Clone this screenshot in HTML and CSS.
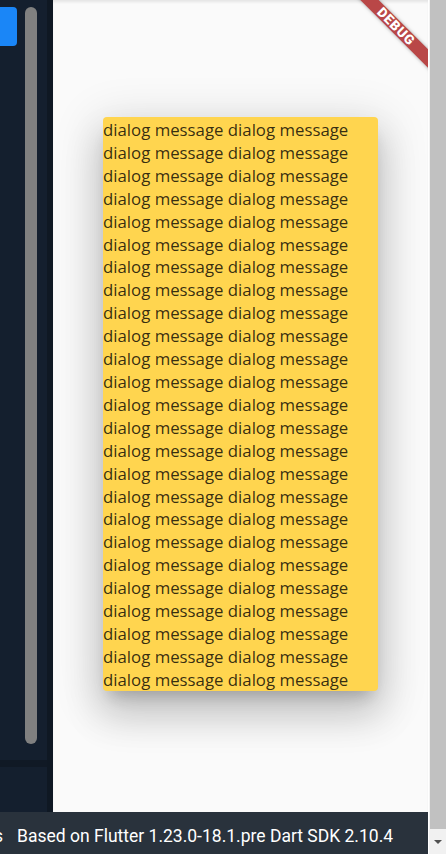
FILE: index.html
```html
<!DOCTYPE html>
<html>
<head>
<meta charset="utf-8">
<link rel="stylesheet" href="styles.css">
</head>
<body>
<div class="page">
  <div class="app">
    <div class="top">
      <div class="sidebar">
        <div class="sidebar-body">
          <div class="sidebar-upper">
            <div class="side-button"></div>
            <div class="side-thumb"></div>
          </div>
          <div class="sidebar-divider"></div>
          <div class="sidebar-lower"></div>
        </div>
        <div class="sidebar-edge"></div>
      </div>
      <div class="main">
        <div class="dialog">
          <p class="dialog-text">dialog message dialog message dialog message dialog message dialog message dialog message dialog message dialog message dialog message dialog message dialog message dialog message dialog message dialog message dialog message dialog message dialog message dialog message dialog message dialog message dialog message dialog message dialog message dialog message dialog message dialog message dialog message dialog message dialog message dialog message dialog message dialog message dialog message dialog message dialog message dialog message dialog message dialog message dialog message dialog message dialog message dialog message dialog message dialog message dialog message dialog message dialog message dialog message dialog message dialog message</p>
        </div>
        <div class="debug-banner">DEBUG</div>
      </div>
    </div>
    <div class="statusbar">
      <span class="status-cut">s</span>
      <span class="status-text">Based on Flutter 1.23.0-18.1.pre Dart SDK 2.10.4</span>
    </div>
  </div>
  <div class="vscroll">
    <div class="vscroll-thumb"></div>
    <div class="vscroll-arrow"><span class="arrow-down"></span></div>
  </div>
</div>
</body>
</html>
```

FILE: styles.css
```css
html, body {
  margin: 0;
  padding: 0;
}
body {
  width: 446px;
  height: 854px;
  overflow: hidden;
  background: #fafafa;
  font-family: "Roboto", "Liberation Sans", sans-serif;
}
.page {
  display: flex;
  width: 446px;
  height: 854px;
}
.app {
  width: 428px;
  display: flex;
  flex-direction: column;
}
.top {
  height: 812px;
  display: flex;
}
.sidebar {
  width: 53px;
  display: flex;
  background: #141f2e;
}
.sidebar-body {
  width: 47px;
  display: flex;
  flex-direction: column;
}
.sidebar-upper {
  height: 753px;
  padding-top: 7px;
  display: flex;
  align-items: flex-start;
}
.side-button {
  width: 17px;
  height: 39px;
  background: #1a86f7;
  border-radius: 0 4px 4px 0;
}
.side-thumb {
  width: 12px;
  height: 737px;
  margin-left: 8px;
  background: #808080;
  border-radius: 6px;
}
.sidebar-divider {
  height: 7px;
  background: #101925;
}
.sidebar-lower {
  flex: 1;
}
.sidebar-edge {
  width: 6px;
  background: #0f1823;
}
.main {
  position: relative;
  width: 375px;
  overflow: hidden;
  background: #fafafa;
  box-shadow: inset 0 3px 3px -1px rgba(0, 0, 0, 0.09);
  display: flex;
  justify-content: center;
  align-items: flex-start;
}
.dialog {
  margin-top: 117px;
  width: 275px;
  height: 574px;
  background: #ffd54f;
  border-radius: 4px;
  overflow: hidden;
  box-shadow: 0 11px 15px -7px rgba(0, 0, 0, 0.2),
              0 24px 38px 3px rgba(0, 0, 0, 0.14),
              0 9px 46px 8px rgba(0, 0, 0, 0.12);
}
.dialog-text {
  margin: 0;
  padding-top: 2px;
  font-family: "Open Sans", "Noto Sans", sans-serif;
  font-size: 16.8px;
  line-height: 22.9px;
  color: rgba(0, 0, 0, 0.8);
}
.debug-banner {
  position: absolute;
  left: 278px;
  top: 20px;
  width: 130px;
  height: 13px;
  line-height: 13px;
  text-align: center;
  transform: rotate(45deg);
  background: #b94747;
  color: #ffffff;
  font-family: "Roboto", "Liberation Sans", sans-serif;
  font-weight: 900;
  font-size: 13.5px;
  letter-spacing: 0.8px;
  box-shadow: 0 0 4px rgba(0, 0, 0, 0.35);
}
.statusbar {
  height: 42px;
  background: #29323c;
  color: #ffffff;
  display: flex;
  align-items: flex-start;
  padding-top: 14px;
  box-sizing: border-box;
  font-size: 17.5px;
  line-height: 20px;
  white-space: nowrap;
  overflow: hidden;
}
.status-cut {
  margin-left: -6px;
}
.status-text {
  margin-left: 14px;
}
.vscroll {
  width: 18px;
  display: flex;
  flex-direction: column;
  background: #f1f1f1;
  border-left: 1px solid #ffffff;
  box-sizing: border-box;
}
.vscroll-thumb {
  height: 829px;
  margin-left: 1px;
  background: #c1c1c1;
}
.vscroll-arrow {
  flex: 1;
  display: flex;
  justify-content: center;
  align-items: center;
}
.arrow-down {
  width: 0;
  height: 0;
  border-left: 4px solid transparent;
  border-right: 4px solid transparent;
  border-top: 4px solid #505050;
  margin-left: 1px;
}
```
